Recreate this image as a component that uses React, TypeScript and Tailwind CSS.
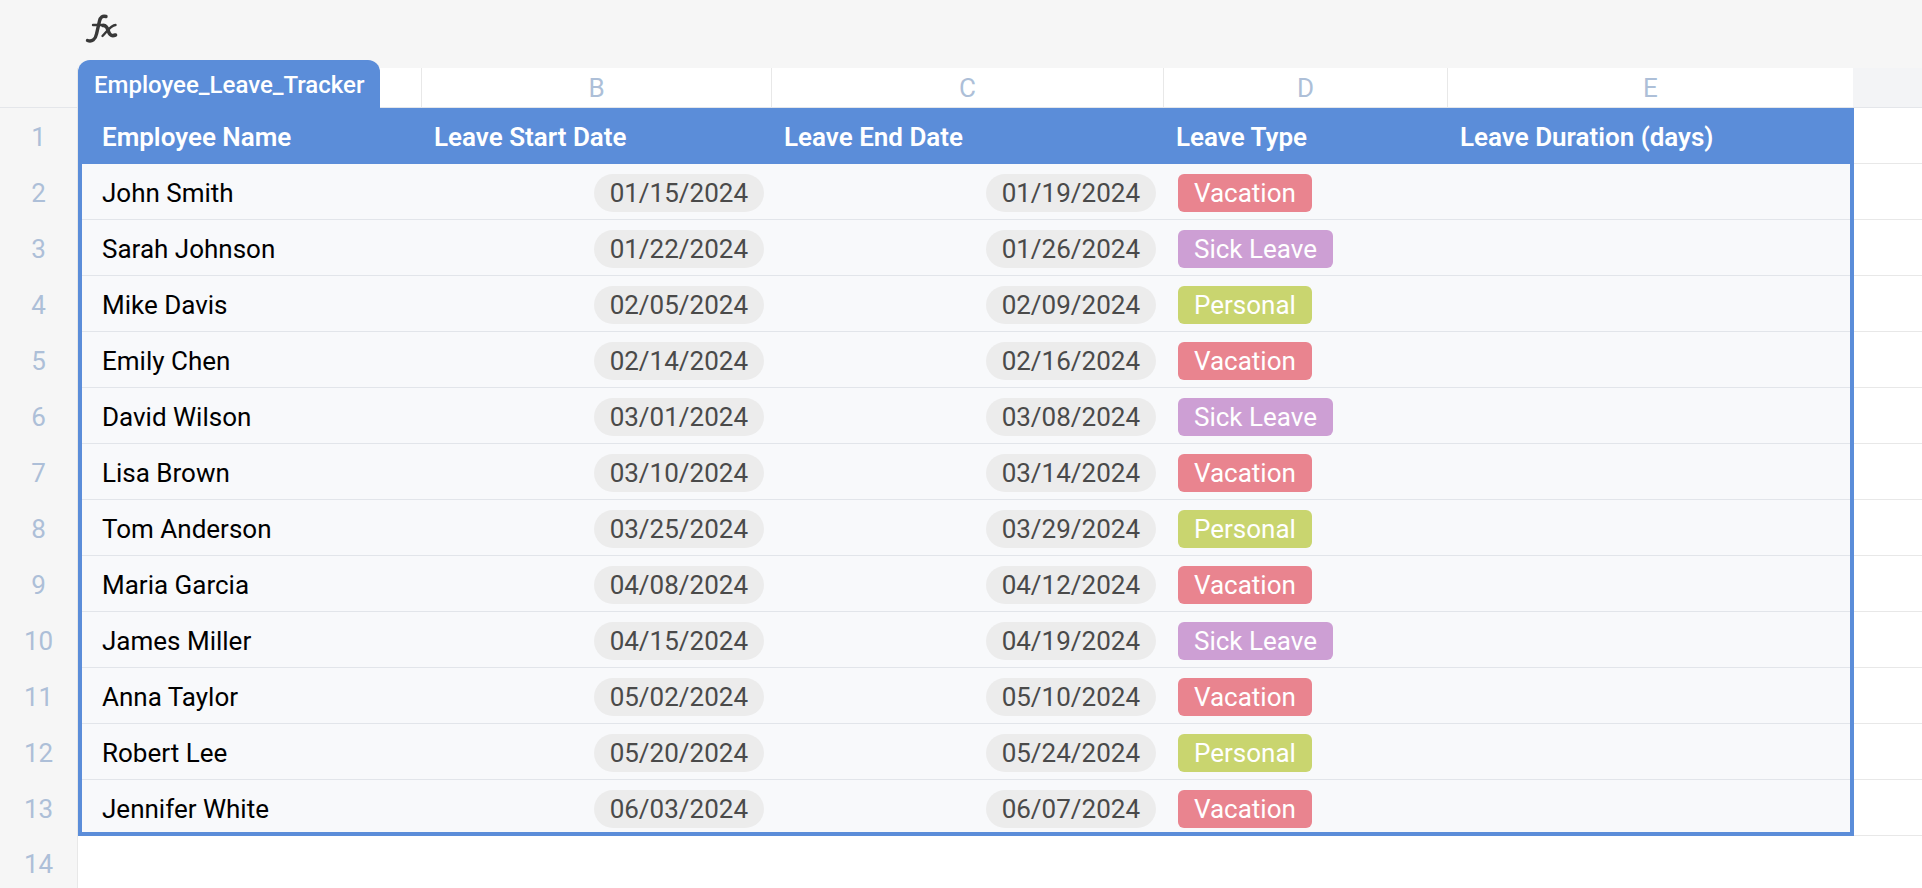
const rows: [string, string, string, "V" | "S" | "P"][] = [
  ["John Smith", "01/15/2024", "01/19/2024", "V"],
  ["Sarah Johnson", "01/22/2024", "01/26/2024", "S"],
  ["Mike Davis", "02/05/2024", "02/09/2024", "P"],
  ["Emily Chen", "02/14/2024", "02/16/2024", "V"],
  ["David Wilson", "03/01/2024", "03/08/2024", "S"],
  ["Lisa Brown", "03/10/2024", "03/14/2024", "V"],
  ["Tom Anderson", "03/25/2024", "03/29/2024", "P"],
  ["Maria Garcia", "04/08/2024", "04/12/2024", "V"],
  ["James Miller", "04/15/2024", "04/19/2024", "S"],
  ["Anna Taylor", "05/02/2024", "05/10/2024", "V"],
  ["Robert Lee", "05/20/2024", "05/24/2024", "P"],
  ["Jennifer White", "06/03/2024", "06/07/2024", "V"],
];

function Num({ n }: { n: number }) {
  return (
    <div className="w-[78px] shrink-0 flex items-center justify-center pt-[2px] bg-[#f6f6f6] border-r border-[#e8e8e8] text-[26px] text-[#adbfd8]">
      {n}
    </div>
  );
}

function Pill({ text }: { text: string }) {
  return (
    <span className="h-[38px] px-4 rounded-full bg-[#ececec] text-[#4a4a4a] flex items-center">{text}</span>
  );
}

function Tag({ kind }: { kind: "V" | "S" | "P" }) {
  if (kind === "V") return <span className="h-[38px] px-4 rounded-md bg-[#e9848f] text-white flex items-center">Vacation</span>;
  if (kind === "S") return <span className="h-[38px] px-4 rounded-md bg-[#cd9fd4] text-white flex items-center">Sick Leave</span>;
  return <span className="h-[38px] px-4 rounded-md bg-[#c9d56f] text-white flex items-center">Personal</span>;
}

function Letter({ c, w }: { c: string; w: string }) {
  return (
    <div className={`${w} shrink-0 flex items-center justify-center border-r border-[#e8e8e8] text-[#adbfd8]`}>{c}</div>
  );
}

export default function App() {
  return (
    <div className="w-[1922px] h-[888px] overflow-hidden bg-white flex flex-col text-[26px] font-['Roboto',sans-serif] leading-none">
      <div className="h-[68px] shrink-0 bg-[#f6f6f6] flex items-center pl-[84px]">
        <svg viewBox="84 12 36 32" className="w-[36px] h-[32px] -mt-[10px]" fill="none" stroke="#383838" strokeLinecap="round">
          <path strokeWidth="3.4" d="M106 15.5C102.5 14.5 100.5 16 99.5 20L96.5 33C95.5 38.5 92 41 87.5 39.5" />
          <path strokeWidth="2.4" d="M93 24H104" />
          <path strokeWidth="3.6" d="M103 24.5C106 24 107 26 108 29C109 32.5 110.5 36 115.5 34" />
          <path strokeWidth="2.4" d="M115.5 24C111 24 106.5 31 102.5 35" />
        </svg>
      </div>

      <div className="h-[40px] shrink-0 flex relative border-b border-[#e4e6ea]">
        <div className="w-[78px] shrink-0 bg-[#f6f6f6] border-r border-[#e8e8e8]" />
        <Letter c="" w="w-[344px]" />
        <Letter c="B" w="w-[350px]" />
        <Letter c="C" w="w-[392px]" />
        <Letter c="D" w="w-[284px]" />
        <div className="w-[405px] shrink-0 flex items-center justify-center text-[#adbfd8]">E</div>
        <div className="flex-1 bg-[#f3f4f6]" />
        <div className="absolute left-[78px] -top-[8px] w-[302px] h-[48px] rounded-t-[12px] bg-[#5b8dd9] text-white text-[24px] font-medium pl-[16px] pt-[13px]">
          Employee_Leave_Tracker
        </div>
      </div>

      <div className="h-[56px] shrink-0 flex">
        <Num n={1} />
        <div className="w-[1776px] shrink-0 flex bg-[#5b8dd9] text-white font-semibold items-center pt-[2px]">
          <div className="w-[344px] pl-[24px]">Employee Name</div>
          <div className="w-[350px] pl-[12px]">Leave Start Date</div>
          <div className="w-[392px] pl-[12px]">Leave End Date</div>
          <div className="w-[284px] pl-[12px]">Leave Type</div>
          <div className="pl-[12px]">Leave Duration (days)</div>
        </div>
        <div className="flex-1 border-b border-[#e8e8e8]" />
      </div>

      {rows.map((r, i) => {
        const last = i === rows.length - 1;
        return (
          <div key={r[0]} className="h-[56px] shrink-0 flex">
            <Num n={i + 2} />
            <div className={`w-[1776px] shrink-0 flex bg-[#f8f9fb] border-x-4 border-[#5b8dd9] ${last ? "border-b-4" : ""}`}>
              <div className={`flex w-full items-start pt-[10px] ${last ? "" : "border-b border-[#e2e5ea]"}`}>
                <div className="w-[340px] h-[38px] flex items-center pl-[20px] text-black">{r[0]}</div>
                <div className="w-[350px] flex justify-end pr-[8px]"><Pill text={r[1]} /></div>
                <div className="w-[392px] flex justify-end pr-[8px]"><Pill text={r[2]} /></div>
                <div className="w-[284px] flex pl-[14px]"><Tag kind={r[3]} /></div>
              </div>
            </div>
            <div className="flex-1 border-b border-[#e8e8e8]" />
          </div>
        );
      })}

      <div className="h-[54px] shrink-0 flex">
        <Num n={14} />
        <div className="flex-1" />
      </div>
    </div>
  );
}
